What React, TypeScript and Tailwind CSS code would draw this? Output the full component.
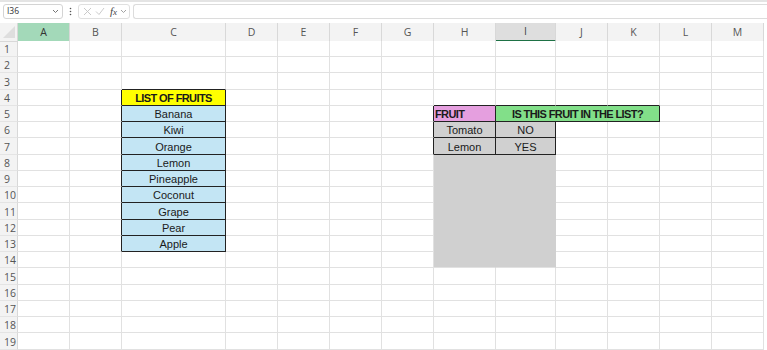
import React from "react";

const COLS = ["A", "B", "C", "D", "E", "F", "G", "H", "I", "J", "K", "L", "M"];
const ROW_H: Record<number, string> = {};
for (let r = 1; r <= 19; r++) ROW_H[r] = [3, 7, 11, 15, 19].includes(r) ? "h-[17px]" : "h-[16px]";

const GRID = "#e1e1e1";
const DARK = "#222222";
const GRAY = "#d0d0d0";

type CellInfo = {
  text?: string;
  bg?: string;
  bold?: boolean;
  align?: "left" | "center";
  span?: number;
  skip?: boolean;
};

const fruits = ["Banana", "Kiwi", "Orange", "Lemon", "Pineapple", "Coconut", "Grape", "Pear", "Apple"];

function info(r: number, c: string): CellInfo {
  if (c === "C" && r === 4) return { text: "LIST OF FRUITS", bg: "#ffff00", bold: true };
  if (c === "C" && r >= 5 && r <= 13) return { text: fruits[r - 5], bg: "#c3e5f4" };
  if (r === 5 && c === "H") return { text: "FRUIT", bg: "#e59fdf", bold: true, align: "left" };
  if (r === 5 && c === "I") return { text: "IS THIS FRUIT IN THE LIST?", bg: "#82df89", bold: true, span: 3 };
  if (r === 5 && (c === "J" || c === "K")) return { skip: true };
  if (r === 6 && c === "H") return { text: "Tomato", bg: GRAY };
  if (r === 6 && c === "I") return { text: "NO", bg: GRAY };
  if (r === 7 && c === "H") return { text: "Lemon", bg: GRAY };
  if (r === 7 && c === "I") return { text: "YES", bg: GRAY };
  if ((c === "H" || c === "I") && r >= 8 && r <= 14) return { bg: GRAY };
  return {};
}

function rightColor(r: number, c: string): string {
  if ((c === "B" || c === "C") && r >= 4 && r <= 13) return DARK;
  if ((c === "G" || c === "H") && r >= 5 && r <= 7) return DARK;
  if (c === "I" && (r === 6 || r === 7)) return DARK;
  if (c === "K" && r === 5) return DARK;
  if (c === "H" && r >= 8 && r <= 14) return GRAY;
  if (c === "I" && r >= 8 && r <= 14) return GRAY;
  return GRID;
}

function bottomColor(r: number, c: string): string {
  if (c === "C" && r >= 3 && r <= 13) return DARK;
  if (["H", "I", "J", "K"].includes(c) && (r === 4 || r === 5)) return DARK;
  if ((c === "H" || c === "I") && (r === 6 || r === 7)) return DARK;
  if ((c === "H" || c === "I") && r >= 8 && r <= 13) return GRAY;
  return GRID;
}

const cellFont = { fontFamily: '"Liberation Sans", Arial, sans-serif' };
const uiFont = { fontFamily: '"Open Sans", "Noto Sans", sans-serif' };

export default function App() {
  return (
    <div className="w-[767px] h-[350px] overflow-hidden bg-white relative" style={uiFont}>
      {/* toolbar */}
      <div className="h-[23px] border-t-2 border-[#e4e4e4] flex items-start pt-[2px] pl-[3px] gap-0">
        <div className="w-[60px] h-[15px] border border-[#d4d4d4] rounded-[3px] flex items-center justify-between pl-[3px] pr-[3px]">
          <span className="text-[8.5px] text-[#333] leading-none">I36</span>
          <svg width="7" height="5" viewBox="0 0 7 5"><path d="M1 1 L3.5 3.5 L6 1" fill="none" stroke="#666" strokeWidth="0.9" /></svg>
        </div>
        <div className="w-[15px] h-[15px] flex items-center justify-center">
          <svg width="3" height="9" viewBox="0 0 3 9"><circle cx="1.5" cy="1.5" r="0.8" fill="#555" /><circle cx="1.5" cy="4.5" r="0.8" fill="#555" /><circle cx="1.5" cy="7.5" r="0.8" fill="#555" /></svg>
        </div>
        <div className="w-[52px] h-[15px] border border-[#e0e0e0] rounded-[3px] flex items-center pl-[4px] gap-[3px]">
          <svg width="9" height="9" viewBox="0 0 9 9"><path d="M1 1 L8 8 M8 1 L1 8" stroke="#c4c4c4" strokeWidth="0.9" /></svg>
          <svg width="10" height="9" viewBox="0 0 10 9"><path d="M1 4.5 L4 7.5 L9 1" fill="none" stroke="#c4c4c4" strokeWidth="0.9" /></svg>
          <span className="ml-[2px] text-[11px] italic text-[#444] leading-none" style={{ fontFamily: '"Liberation Serif", serif' }}>
            f<span className="text-[9px]">x</span>
          </span>
          <svg width="7" height="5" viewBox="0 0 7 5"><path d="M1 1 L3.5 3.5 L6 1" fill="none" stroke="#999" strokeWidth="0.9" /></svg>
        </div>
        <div className="ml-[3px] flex-1 h-[15px] border border-[#dcdcdc] rounded-l-[3px] border-r-0" />
      </div>

      {/* column headers */}
      <div className="grid grid-cols-[18px_52px_52px_104px_52px_52px_52px_52px_62px_60px_52px_52px_52px_52px_1fr] h-[18px] bg-[#f3f3f3]">
        <div className="border-r border-b border-[#d8d8d8] relative overflow-hidden">
          <svg width="18" height="17" viewBox="0 0 18 17" className="absolute inset-0">
            <path d="M15 3 L15 15 L3 15 Z" fill="#dedede" />
          </svg>
        </div>
        {COLS.map((c) => {
          const sel = c === "I";
          const grn = c === "A";
          return (
            <div
              key={c}
              className={
                "flex items-center justify-center pt-[1px] text-[10.5px] border-r " +
                (grn
                  ? "bg-[#a3d9b9] text-[#333] border-[#d8d8d8] border-b border-b-[#d8d8d8]"
                  : sel
                  ? "bg-[#dedede] text-[#444] border-[#d8d8d8] border-b-2 border-b-[#1e7145]"
                  : "text-[#555] border-[#d8d8d8] border-b")
              }
            >
              {c}
            </div>
          );
        })}
        <div className="border-b border-[#d8d8d8] bg-white" />
      </div>

      {/* rows */}
      {Array.from({ length: 19 }, (_, i) => i + 1).map((r) => (
        <div
          key={r}
          className={
            "grid grid-cols-[18px_52px_52px_104px_52px_52px_52px_52px_62px_60px_52px_52px_52px_52px_1fr] " + ROW_H[r]
          }
        >
          <div className="bg-[#f3f3f3] border-r border-b border-r-[#d8d8d8] border-b-[#e4e4e4] flex items-center pl-[4px] pt-[2px] text-[10.5px] text-[#555] leading-none">
            {r}
          </div>
          {COLS.map((c) => {
            const inf = info(r, c);
            if (inf.skip) return null;
            const span = inf.span || 1;
            const lastCol = COLS[COLS.indexOf(c) + span - 1];
            return (
              <div
                key={c}
                className={
                  "flex items-center pt-[2px] overflow-visible whitespace-nowrap border-r border-b text-[11px] text-[#1a1a1a] leading-none " +
                  (span === 3 ? "col-span-3 " : "") +
                  (inf.align === "left" ? "justify-start pl-[1px] " : "justify-center ") +
                  (inf.bold ? "font-bold tracking-[-0.6px] " : "")
                }
                style={{
                  ...cellFont,
                  backgroundColor: inf.bg || "#ffffff",
                  borderRightColor: rightColor(r, lastCol),
                  borderBottomColor: bottomColor(r, c),
                }}
              >
                {inf.text}
              </div>
            );
          })}
          <div className="bg-white" />
        </div>
      ))}
    </div>
  );
}
